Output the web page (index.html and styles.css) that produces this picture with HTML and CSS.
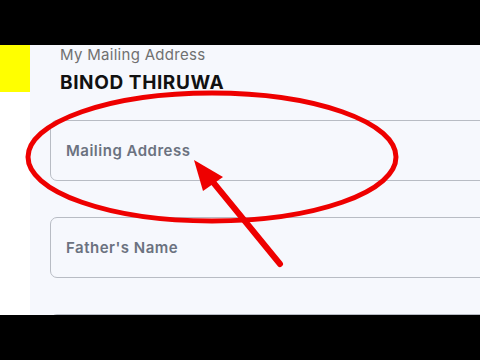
FILE: index.html
```html
<!DOCTYPE html>
<html lang="en">
<head>
    <meta charset="UTF-8">
    <meta name="viewport" content="width=device-width, initial-scale=1.0">
    <title>My Mailing Address</title>
    <link rel="stylesheet" href="styles.css">
</head>
<body>
    <div id="tela">
        <div class="faixa"></div>
        <div id="conteudo">
            <div class="lateral">
                <div class="amarelo"></div>
            </div>
            <div id="painel">
                <p class="subtitulo">My Mailing Address</p>
                <h1 class="nome">BINOD THIRUWA</h1>
                <div class="campo">Mailing Address</div>
                <div class="campo">Father's Name</div>
                <div class="campo"></div>
            </div>
        </div>
        <div class="faixa"></div>
        <!-- marcação vermelha por cima -->
        <svg class="marca" width="480" height="360" viewBox="0 0 480 360">
            <ellipse cx="212" cy="157" rx="184" ry="64" fill="none" stroke="#ee0000" stroke-width="5"/>
            <line x1="280" y1="264" x2="208" y2="176" stroke="#ee0000" stroke-width="6" stroke-linecap="round"/>
            <polygon points="194,160 223,177 203,191" fill="#ee0000"/>
        </svg>
    </div>
</body>
</html>
```

FILE: styles.css
```css
body {
    margin: 0;
    padding: 0;
    background: #000;
    font-family: Inter, "Noto Sans", sans-serif;
}
#tela {
    position: relative;
    width: 480px;
    height: 360px;
    overflow: hidden;
    display: flex;
    flex-direction: column;
}
.faixa {
    height: 45px;
    background: #000;
}
#conteudo {
    height: 270px;
    display: flex;
}
.lateral {
    width: 30px;
    background: #fff;
}
.amarelo {
    height: 47px;
    background: #ffff00;
}
#painel {
    flex: 1;
    background: #f6f8fd;
    padding: 0 0 0 20px;
    overflow: hidden;
}
.subtitulo {
    margin: 1px 0 0 10px;
    font-size: 15px;
    line-height: 18px;
    letter-spacing: 0.3px;
    color: #707070;
}
.nome {
    margin: 8px 0 0 10px;
    font-size: 19px;
    line-height: 22px;
    font-weight: 700;
    letter-spacing: 0.6px;
    color: #111;
}
.campo {
    width: 500px;
    height: 59px;
    margin-top: 36px;
    border: 1px solid #b8bcc4;
    border-radius: 7px;
    padding-left: 15px;
    display: flex;
    align-items: center;
    font-size: 15px;
    font-weight: 600;
    letter-spacing: 0.5px;
    color: #6b7280;
}
.campo + .campo {
    margin-top: 36px;
}
.nome + .campo {
    margin-top: 26px;
}
.marca {
    position: absolute;
    top: 0;
    left: 0;
}
```
